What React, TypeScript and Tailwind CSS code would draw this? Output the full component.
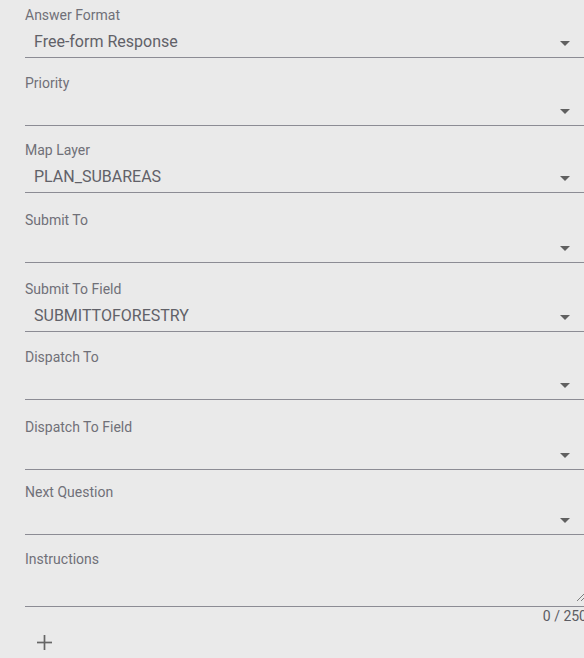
import React from "react";

type Field = { label: string; value?: string; mt: string };

const fields: Field[] = [
  { label: "Answer Format", value: "Free-form Response", mt: "mt-[5px]" },
  { label: "Priority", mt: "mt-[15px]" },
  { label: "Map Layer", value: "PLAN_SUBAREAS", mt: "mt-[14px]" },
  { label: "Submit To", mt: "mt-[17px]" },
  { label: "Submit To Field", value: "SUBMITTOFORESTRY", mt: "mt-[16px]" },
  { label: "Dispatch To", mt: "mt-[15px]" },
  { label: "Dispatch To Field", mt: "mt-[17px]" },
  { label: "Next Question", mt: "mt-[12px]" },
];

function SelectField({ f }: { f: Field }) {
  return (
    <div className={f.mt}>
      <div className="text-[14px] leading-[20px] text-[#707078]">{f.label}</div>
      <div className="relative h-[33px] border-b border-[#8c8c94] pl-[9px] pt-[5px] text-[16px] leading-[24px] text-[#616168]">
        {f.value ?? ""}
        <span className="absolute right-[17px] top-[16px] h-0 w-0 border-l-[5px] border-r-[5px] border-t-[5px] border-l-transparent border-r-transparent border-t-[#606060]" />
      </div>
    </div>
  );
}

export default function App() {
  return (
    <div className="h-[658px] w-[584px] overflow-hidden bg-[#eaeaea] font-['Roboto',sans-serif]">
      <div className="w-[587px] pl-[25px]">
        {fields.map((f) => (
          <SelectField key={f.label} f={f} />
        ))}
        <div className="mt-[14px]">
          <div className="text-[14px] leading-[20px] text-[#707078]">Instructions</div>
          <div className="relative h-[38px] border-b border-[#8c8c94]">
            <textarea className="h-full w-full resize-none bg-transparent outline-none" />
            <svg
              className="pointer-events-none absolute bottom-[5px] right-[2px]"
              width="9"
              height="9"
              viewBox="0 0 9 9"
            >
              <line x1="1" y1="9" x2="9" y2="1" stroke="#707070" strokeWidth="0.9" />
              <line x1="5" y1="9" x2="9" y2="5" stroke="#707070" strokeWidth="0.9" />
            </svg>
          </div>
          <div className="text-right text-[14px] leading-[18px] text-[#5c5c63]">0 / 250</div>
        </div>
        <button className="ml-[12px] mt-[10px] flex h-[15px] w-[15px] items-center justify-center">
          <svg width="15" height="15" viewBox="0 0 15 15">
            <line x1="7.5" y1="0" x2="7.5" y2="15" stroke="#666" strokeWidth="1.7" />
            <line x1="0" y1="7.5" x2="15" y2="7.5" stroke="#666" strokeWidth="1.7" />
          </svg>
        </button>
      </div>
    </div>
  );
}
